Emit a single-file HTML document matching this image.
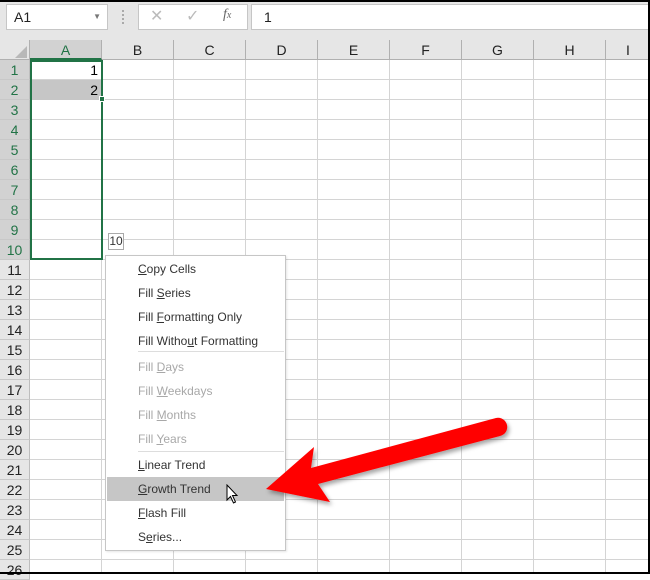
<!DOCTYPE html>
<html><head><style>
*{margin:0;padding:0;box-sizing:border-box}
body{width:650px;height:574px;overflow:hidden;background:#fff;position:relative;font-family:"Liberation Sans",sans-serif;}
.a{position:absolute}
.rh{position:absolute;left:0;width:30px;height:20px;background:#e6e6e6;border-bottom:1px solid #c8c8c8;border-right:1px solid #bdbdbd;font-size:14px;color:#222;text-align:center;line-height:20px}
.ch{position:absolute;top:40px;height:20px;background:#e6e6e6;border-right:1px solid #b0b0b0;border-bottom:1px solid #b0b0b0;font-size:14px;color:#222;text-align:center;line-height:20px}
.mi{position:absolute;left:138px;font-size:12px;color:#333;line-height:16px}
.dis{color:#a8a8a8}
u{text-decoration:underline}
</style></head><body>
<!-- top bar -->
<div class="a" style="left:0;top:0;width:650px;height:40px;background:#e6e6e6;border-top:2px solid #000"></div>
<div class="a" style="left:6px;top:4px;width:102px;height:26px;background:#fff;border:1px solid #c6c6c6;font-size:14px;line-height:24px;padding-left:7px;color:#222">A1<span style="position:absolute;right:6px;top:0;font-size:8px;color:#777">▼</span></div>
<div class="a" style="left:122px;top:10px;width:2px;height:14px;border-left:2px dotted #aaa"></div>
<div class="a" style="left:138px;top:4px;width:110px;height:26px;background:#fff;border:1px solid #c6c6c6"></div>
<div class="a" style="left:150px;top:6px;font-size:16px;color:#bbb">✕</div>
<div class="a" style="left:186px;top:6px;font-size:16px;color:#bbb">✓</div>
<div class="a" style="left:223px;top:7px;font-size:14px;color:#666;font-style:italic;font-family:'Liberation Serif',serif">f<span style="font-size:10px">x</span></div>
<div class="a" style="left:251px;top:4px;width:400px;height:26px;background:#fff;border:1px solid #c6c6c6;font-size:14px;line-height:24px;padding-left:12px;color:#222">1</div>
<!-- grid -->
<div class="a" style="left:30px;top:60px;width:620px;height:514px;background-image:linear-gradient(to right,#d4d4d4 1px,transparent 1px),linear-gradient(to bottom,#d4d4d4 1px,transparent 1px);background-size:72px 20px;background-position:-1px -1px"></div>
<!-- headers -->
<div class="a" style="left:0;top:40px;width:30px;height:20px;background:#e6e6e6;border-right:1px solid #b0b0b0;border-bottom:1px solid #b0b0b0"></div>
<div class="a" style="left:15px;top:46px;width:0;height:0;border-left:12px solid transparent;border-bottom:12px solid #b8b8b8"></div>
<div class="ch" style="left:30px;width:72px;background:#d2d2d2;color:#217346;border-bottom:2px solid #217346">A</div>
<div class="ch" style="left:102px;width:72px">B</div>
<div class="ch" style="left:174px;width:72px">C</div>
<div class="ch" style="left:246px;width:72px">D</div>
<div class="ch" style="left:318px;width:72px">E</div>
<div class="ch" style="left:390px;width:72px">F</div>
<div class="ch" style="left:462px;width:72px">G</div>
<div class="ch" style="left:534px;width:72px">H</div>
<div class="ch" style="left:606px;width:44px;border-right:none">I</div>
<div id="rows"></div>
<script>
var s='';for(var i=1;i<=26;i++){var sel=i<=10;s+='<div class="rh" style="top:'+(40+i*20)+'px;'+(sel?'background:#d2d2d2;color:#217346;':'')+'">'+i+'</div>';}
document.getElementById('rows').innerHTML=s;
</script>
<!-- selected cells -->
<div class="a" style="left:31px;top:80px;width:70px;height:20px;background:#c6c6c6"></div>
<div class="a" style="left:30px;top:60px;width:73px;height:200px;border:2px solid #217346"></div>
<div class="a" style="left:99px;top:96px;width:6px;height:6px;background:#217346;border:1px solid #fff"></div>
<div class="a" style="left:80px;top:62px;width:18px;text-align:right;font-size:14px;line-height:17px">1</div>
<div class="a" style="left:80px;top:82px;width:18px;text-align:right;font-size:14px;line-height:17px">2</div>
<!-- badge -->
<div class="a" style="left:108px;top:233px;width:16px;height:17px;background:#fff;border:1px solid #aaa;font-size:12px;line-height:15px;text-align:center;color:#333">10</div>
<!-- menu -->
<div class="a" style="left:105px;top:255px;width:181px;height:296px;background:#fff;border:1px solid #c6c6c6;box-shadow:1px 1px 2px rgba(0,0,0,.1)"></div>
<div class="a" style="left:138px;top:351px;width:146px;height:1px;background:#ddd"></div>
<div class="a" style="left:138px;top:451px;width:146px;height:1px;background:#ddd"></div>
<div class="a" style="left:107px;top:477px;width:177px;height:24px;background:#c6c6c6"></div>
<div class="mi" style="top:261px"><u>C</u>opy Cells</div>
<div class="mi" style="top:285px">Fill <u>S</u>eries</div>
<div class="mi" style="top:309px">Fill <u>F</u>ormatting Only</div>
<div class="mi" style="top:333px">Fill Witho<u>u</u>t Formatting</div>
<div class="mi dis" style="top:359px">Fill <u>D</u>ays</div>
<div class="mi dis" style="top:383px">Fill <u>W</u>eekdays</div>
<div class="mi dis" style="top:407px">Fill <u>M</u>onths</div>
<div class="mi dis" style="top:431px">Fill <u>Y</u>ears</div>
<div class="mi" style="top:457px"><u>L</u>inear Trend</div>
<div class="mi" style="top:481px"><u>G</u>rowth Trend</div>
<div class="mi" style="top:505px"><u>F</u>lash Fill</div>
<div class="mi" style="top:529px">S<u>e</u>ries...</div>
<!-- cursor -->
<svg class="a" style="left:226px;top:484px" width="14" height="22" viewBox="0 0 14 22"><path d="M1 1 L1 16 L4.5 12.5 L7.5 19 L9.5 18 L6.5 11.5 L11 11.5 Z" fill="#fff" stroke="#000" stroke-width="1"/></svg>
<!-- arrow -->
<svg class="a" style="left:0;top:0" width="650" height="574" viewBox="0 0 650 574">
<defs><filter id="sh" x="-20%" y="-20%" width="140%" height="140%"><feDropShadow dx="2" dy="3" stdDeviation="2" flood-color="#000" flood-opacity="0.35"/></filter></defs>
<g filter="url(#sh)">
<path d="M266 489 L314 447 L311 468 L496 418 A9 9 0 0 1 500 436 L318 484 L330 502 Z" fill="#ff0000"/>
</g>
</svg>
<div class="a" style="left:0;top:572px;width:650px;height:2px;background:#000"></div>
<div class="a" style="left:648px;top:0;width:2px;height:574px;background:#000"></div>
</body></html>
